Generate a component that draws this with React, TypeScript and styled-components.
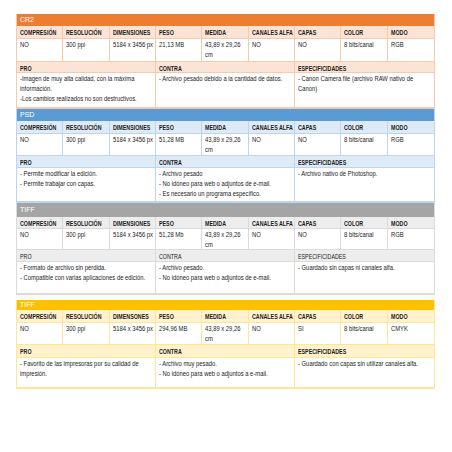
import React from 'react';
import styled, { createGlobalStyle } from 'styled-components';

const GlobalStyle = createGlobalStyle`
  body {
    margin: 0;
    background: #ffffff;
    font-family: "Liberation Sans", Arial, sans-serif;
    color: #1c1c1c;
  }
`;

interface Palette {
  bar: string;
  tint: string;
  line: string;
}

const PALETTES: Record<string, Palette> = {
  orange: { bar: '#ed7d31', tint: '#fbe4d5', line: '#f7caac' },
  blue: { bar: '#5b9bd5', tint: '#deeaf6', line: '#bdd6ee' },
  gray: { bar: '#a5a5a5', tint: '#ededed', line: '#dbdbdb' },
  gold: { bar: '#ffc000', tint: '#fff2cc', line: '#ffe599' },
};

const Page = styled.div`
  width: 452px;
  height: 452px;
  padding: 14px 17px 0 16px;
  box-sizing: border-box;
  display: flex;
  flex-direction: column;
`;

const Grid = styled.div<{ $p: Palette }>`
  display: grid;
  grid-template-columns: repeat(9, 1fr);
  border-left: 1px solid ${(p) => p.$p.line};
  border-right: 1px solid ${(p) => p.$p.line};
  border-bottom: 1px solid ${(p) => p.$p.line};
`;

const Bar = styled.div<{ $p: Palette; $h: number }>`
  grid-column: 1 / -1;
  height: ${(p) => p.$h}px;
  background: ${(p) => p.$p.bar};
  color: #ffffff;
  font-size: 7px;
  line-height: ${(p) => p.$h}px;
  padding-left: 3px;
  overflow: hidden;
`;

const Cell = styled.div<{ $p: Palette; $head?: boolean; $span?: number; $h: number; $last?: boolean }>`
  grid-column: span ${(p) => p.$span ?? 1};
  height: ${(p) => p.$h}px;
  box-sizing: border-box;
  background: ${(p) => (p.$head ? p.$p.tint : '#ffffff')};
  border-right: ${(p) => (p.$last ? 'none' : `1px solid ${p.$p.line}`)};
  border-bottom: 1px solid ${(p) => p.$p.line};
  padding: ${(p) => (p.$head ? '1.5px 3px 0' : '1px 3px 0')};
  overflow: hidden;
`;

// Calibri-like narrow text: Arial metrics squeezed horizontally
const HeadText = styled.div<{ $bold?: boolean }>`
  width: ${100 / 0.76}%;
  transform: scaleX(0.76);
  transform-origin: 0 0;
  white-space: pre;
  font-size: 7px;
  line-height: 9.5px;
  font-weight: ${(p) => (p.$bold === false ? 400 : 700)};
`;

const BodyText = styled.div<{ $keep?: boolean }>`
  width: ${100 / 0.78}%;
  transform: scaleX(0.78);
  transform-origin: 0 0;
  white-space: ${(p) => (p.$keep ? 'pre' : 'normal')};
  font-size: 7.5px;
  line-height: 9.8px;
`;

interface Section {
  title: string;
  palette: Palette;
  heads: string[];
  values: string[];
  pro: string[];
  contra: string[];
  esp: string[];
  barH: number;
  headH: number;
  dataH: number;
  subH: number;
  bodyH: number;
  boldSub: boolean;
}

const HEADS = ['COMPRESIÓN', 'RESOLUCIÓN', 'DIMENSIONES', 'PESO', 'MEDIDA', 'CANALES ALFA', 'CAPAS', 'COLOR', 'MODO'];

const SECTIONS: Section[] = [
  {
    title: 'CR2',
    palette: PALETTES.orange,
    heads: HEADS,
    values: ['NO', '300 ppi', '5184 x 3456 px', '21,13 MB', '43,89 x 29,26\ncm', 'NO', 'NO', '8 bits/canal', 'RGB'],
    pro: ['-Imagen de muy alta calidad, con la máxima información.', '-Los cambios realizados no son destructivos.'],
    contra: ['- Archivo pesado debido a la cantidad de datos.'],
    esp: ['- Canon Camera file (archivo RAW nativo de Canon)'],
    barH: 12, headH: 13, dataH: 23, subH: 11, bodyH: 35, boldSub: true,
  },
  {
    title: 'PSD',
    palette: PALETTES.blue,
    heads: HEADS,
    values: ['NO', '300 ppi', '5184 x 3456 px', '51,28 MB', '43,89 x 29,26\ncm', 'NO', 'NO', '8 bits/canal', 'RGB'],
    pro: ['- Permite modificar la edición.', '- Permite trabajar con capas.'],
    contra: ['- Archivo pesado', '- No idóneo para web o adjuntos de e-mail.', '- Es necesario un programa específico.'],
    esp: ['- Archivo nativo de Photoshop.'],
    barH: 12, headH: 13, dataH: 22, subH: 12, bodyH: 34, boldSub: true,
  },
  {
    title: 'TIFF',
    palette: PALETTES.gray,
    heads: HEADS,
    values: ['NO', '300 ppi', '5184 x 3456 px', '51,28 Mb', '43,89 x 29,26\ncm', 'NO', 'NO', '8 bits/canal', 'RGB'],
    pro: ['- Formato de archivo sin pérdida.', '- Compatible con varias aplicaciones de edición.'],
    contra: ['- Archivo pesado.', '- No idóneo para web o adjuntos de e-mail.'],
    esp: ['- Guardado sin capas ni canales alfa.'],
    barH: 14, headH: 12, dataH: 21, subH: 12, bodyH: 32, boldSub: false,
  },
  {
    title: 'TIFF',
    palette: PALETTES.gold,
    heads: ['COMPRESIÓN', 'RESOLUCIÓN', 'DIMENSONES', 'PESO', 'MEDIDA', 'CANALES ALFA', 'CAPAS', 'COLOR', 'MODO'],
    values: ['NO', '300 ppi', '5184 x 3456 px', '294,96 MB', '43,89 x 29,26\ncm', 'NO', 'SI', '8 bits/canal', 'CMYK'],
    pro: ['- Favorito de las impresoras por su calidad de impresión.'],
    contra: ['- Archivo muy pesado.', '- No idóneo para web o adjuntos a e-mail.'],
    esp: ['- Guardado con capas sin utilizar canales alfa.'],
    barH: 10, headH: 13, dataH: 22, subH: 13, bodyH: 30, boldSub: true,
  },
];

const Gap = styled.div<{ $h: number; $bg: string }>`
  height: ${(p) => p.$h}px;
  background: ${(p) => p.$bg};
`;

const Lines: React.FC<{ items: string[] }> = ({ items }) => (
  <BodyText>
    {items.map((t) => (
      <div key={t}>{t}</div>
    ))}
  </BodyText>
);

const FormatTable: React.FC<{ s: Section }> = ({ s }) => {
  const p = s.palette;
  return (
    <Grid $p={p}>
      <Bar $p={p} $h={s.barH}>{s.title}</Bar>
      {s.heads.map((h, i) => (
        <Cell key={h} $p={p} $head $h={s.headH} $last={i === 8}>
          <HeadText>{h}</HeadText>
        </Cell>
      ))}
      {s.values.map((v, i) => (
        <Cell key={i} $p={p} $h={s.dataH} $last={i === 8}>
          <BodyText $keep>{v}</BodyText>
        </Cell>
      ))}
      <Cell $p={p} $head $span={3} $h={s.subH}><HeadText $bold={s.boldSub}>PRO</HeadText></Cell>
      <Cell $p={p} $head $span={3} $h={s.subH}><HeadText $bold={s.boldSub}>CONTRA</HeadText></Cell>
      <Cell $p={p} $head $span={3} $h={s.subH} $last><HeadText $bold={s.boldSub}>ESPECIFICIDADES</HeadText></Cell>
      <Cell $p={p} $span={3} $h={s.bodyH}><Lines items={s.pro} /></Cell>
      <Cell $p={p} $span={3} $h={s.bodyH}><Lines items={s.contra} /></Cell>
      <Cell $p={p} $span={3} $h={s.bodyH} $last><Lines items={s.esp} /></Cell>
    </Grid>
  );
};

export default function App() {
  return (
    <>
      <GlobalStyle />
      <Page>
        <FormatTable s={SECTIONS[0]} />
        <FormatTable s={SECTIONS[1]} />
        <FormatTable s={SECTIONS[2]} />
        <Gap $h={5} $bg="#fffbee" />
        <FormatTable s={SECTIONS[3]} />
      </Page>
    </>
  );
}
